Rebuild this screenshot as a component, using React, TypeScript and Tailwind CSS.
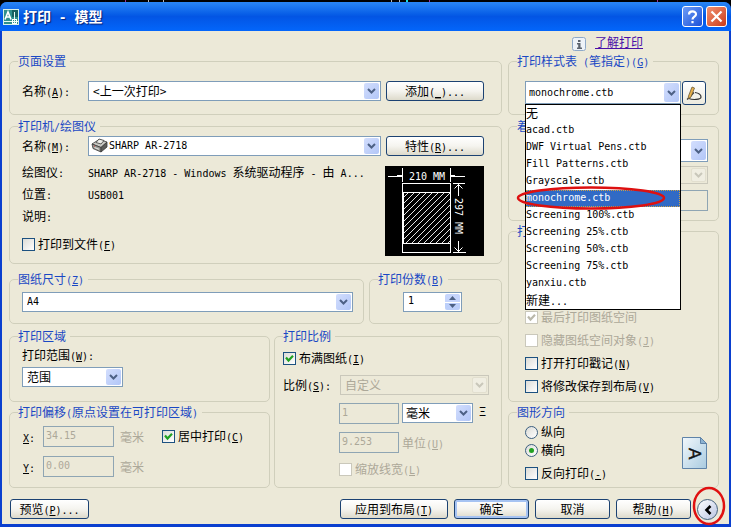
import React, { useState } from 'react';
import clsx from 'clsx';

const STYLE_TABLES = [
    '无',
    'acad.ctb',
    'DWF Virtual Pens.ctb',
    'Fill Patterns.ctb',
    'Grayscale.ctb',
    'monochrome.ctb',
    'Screening 100%.ctb',
    'Screening 25%.ctb',
    'Screening 50%.ctb',
    'Screening 75%.ctb',
    'yanxiu.ctb',
    '新建...',
];

// Latin runs use the narrow mono face; "&" marks the mnemonic letter
function Txt({ children }: { children: string }) {
    return (
        <>
            {children.split(/([\x20-\x7e]+)/).map((run, i) => {
                if (i % 2 === 0) return run;
                const at = run.indexOf('&');
                return (
                    <span key={i} className="font-['DejaVu_Sans_Mono',monospace] text-[10px] leading-none whitespace-pre">
                        {at < 0 ? run : <>{run.slice(0, at)}<u>{run[at + 1]}</u>{run.slice(at + 2)}</>}
                    </span>
                );
            })}
        </>
    );
}

function Group({ title, className, children }: { title: string; className?: string; children: React.ReactNode }) {
    return (
        <fieldset className={clsx('min-w-0 border border-[#d0cfbc] rounded-[5px] pl-2', className)}>
            <legend className="h-4 leading-4 pr-1 text-[#1a48c4] whitespace-nowrap"><Txt>{title}</Txt></legend>
            {children}
        </fieldset>
    );
}

type ComboProps = { id?: string; label?: string; value: string; disabled?: boolean; latin?: boolean; className?: string; selectClass?: string; children?: React.ReactNode };

function Combo({ id, label, value, disabled, latin, className, selectClass, children }: ComboProps) {
    return (
        <div className={clsx('relative h-5', className)}>
            <select
                id={id}
                aria-label={label}
                disabled={disabled}
                className={clsx(
                    'block appearance-none w-full h-full border pr-5 outline-none opacity-100',
                    disabled ? 'bg-[#ece9d8] border-[#cac8bb] text-[#aca899]' : 'bg-white border-[#7f9db9] text-black',
                    latin && "font-['DejaVu_Sans_Mono',monospace] text-[10px]",
                    selectClass ?? 'pl-1',
                )}
            >
                <option>{value}</option>
            </select>
            <span
                className={clsx(
                    'absolute right-[2px] inset-y-[2px] w-[15px] rounded-[2px] flex items-center justify-center pointer-events-none',
                    disabled ? 'bg-[#f0eee2] border border-[#e2dfcf] text-[#c9c7ba]' : 'bg-gradient-to-br from-[#d3defd] to-[#b2c6f7] text-[#4d6185]',
                )}
            >
                <svg width="9" height="6" viewBox="0 0 9 6" fill="none" stroke="currentColor" strokeWidth="2"><path d="M1 1l3.5 3.5L8 1" /></svg>
            </span>
            {children}
        </div>
    );
}

function Push({ children, className }: { children: string; className?: string }) {
    return (
        <button
            type="button"
            className={clsx('h-5 border border-[#1c4272] rounded-[3px] bg-gradient-to-b from-white via-[#f5f4ef] to-[#dddacb] flex items-center justify-center whitespace-nowrap', className)}
        >
            <span><Txt>{children}</Txt></span>
        </button>
    );
}

function Check({ children, checked, disabled }: { children: string; checked?: boolean; disabled?: boolean }) {
    return (
        <label className={clsx('flex items-center gap-[3px] h-4 whitespace-nowrap', disabled && 'text-[#aca899]')}>
            <span className="grid place-items-center">
                <input
                    type="checkbox"
                    defaultChecked={checked}
                    disabled={disabled}
                    className={clsx(
                        'peer appearance-none col-start-1 row-start-1 size-[13px] border',
                        disabled ? 'bg-white border-[#cac8bb]' : 'bg-gradient-to-br from-[#dcdcd7] to-white border-[#1c5180]',
                    )}
                />
                <svg className={clsx('hidden peer-checked:block col-start-1 row-start-1 pointer-events-none', disabled ? 'text-[#bab8aa]' : 'text-[#21a121]')} width="9" height="9" viewBox="0 0 9 9" fill="none" stroke="currentColor" strokeWidth="2.2">
                    <path d="M1 3.5l2.5 3L8 1.8" />
                </svg>
            </span>
            <span><Txt>{children}</Txt></span>
        </label>
    );
}

function Radio({ children, checked }: { children: string; checked?: boolean }) {
    return (
        <label className="flex items-center gap-[3px] h-4">
            <span className="grid place-items-center">
                <input type="radio" name="orientation" defaultChecked={checked} className="peer appearance-none col-start-1 row-start-1 size-[13px] rounded-full border border-[#3b5f80] bg-gradient-to-br from-[#dcdcd7] to-white" />
                <span className="hidden peer-checked:block col-start-1 row-start-1 size-[5px] rounded-full bg-[#21a121] pointer-events-none" />
            </span>
            <span>{children}</span>
        </label>
    );
}

function NumBox({ id, label, value, className }: { id?: string; label?: string; value: string; className?: string }) {
    return (
        <input
            id={id}
            aria-label={label}
            defaultValue={value}
            disabled
            className={clsx("h-[21px] border border-[#8fa5b3] bg-[#ece9d8] px-[2px] pb-[2px] font-['DejaVu_Sans_Mono',monospace] text-[10px] text-[#aca899]", className)}
        />
    );
}

function PaperPreview() {
    return (
        <svg className="block bg-black" width="99" height="90" viewBox="0 0 99 90" fill="none" stroke="#fff" shapeRendering="crispEdges">
            <defs>
                <clipPath id="printable"><rect x="18" y="27" width="47" height="50" /></clipPath>
            </defs>
            <path d="M17.5 2v14M65.5 2v14M3 10.5h14M66 10.5h14M12 9.5h5M66 9.5h4" />
            <rect x="17.5" y="17.5" width="48" height="69" />
            <rect x="18.5" y="26.5" width="47" height="51" />
            <g clipPath="url(#printable)" shapeRendering="auto" strokeWidth="0.9">
                {Array.from({ length: 17 }, (_, i) => (
                    <path key={i} d={`M18 ${32 + i * 6}L${68} ${-18 + i * 6}`} />
                ))}
            </g>
            <path d="M68 17.5h12M68 86.5h13M73.5 18v12M73.5 75v11" />
            <path d="M69.500 22.500l4-4 4 4M69.500 81.500l4 4 4-4" shapeRendering="auto" />
            <g fill="#fff" stroke="none" fontFamily="DejaVu Sans Mono, monospace" fontSize="10">
                <text x="24" y="14">210 MM</text>
                <text transform="translate(70 32) rotate(90)">297 MM</text>
            </g>
        </svg>
    );
}

function PrinterIcon() {
    return (
        <svg className="absolute left-[3px] top-[2px] pointer-events-none" width="17" height="15" viewBox="0 0 17 15" stroke="#3a3a3a" strokeWidth="0.8" strokeLinejoin="round">
            <path d="M1 6l7-4.500 8 2.500-6 5.500z" fill="#c9c9c4" />
            <path d="M1 6l9 3.500V14l-8-3.500z" fill="#989893" />
            <path d="M10 9.500L16 4v5l-6 5z" fill="#5d5d5a" />
            <path d="M5 4.500l3-3.500 5 1.500-3 3.500z" fill="#eeeeea" />
            <path d="M3.500 9.500l4.500 1.800" stroke="#fff" />
            <circle cx="3.500" cy="8" r="0.6" fill="#d33" stroke="none" />
        </svg>
    );
}

function AppIcon() {
    return (
        <svg width="16" height="16" viewBox="0 0 16 16" fill="none">
            <rect x="0.5" y="0.5" width="15" height="15" fill="#2f8f8c" stroke="#d6efe8" />
            <path d="M9 1h6v7H9z" fill="#17605f" />
            <path d="M2 10.500L5 3l3 7.500M3 8h4" stroke="#fff" strokeWidth="1.6" />
            <path d="M1 12.500h14M11.500 3v12" stroke="#e8fbf5" />
            <rect x="9.500" y="10.500" width="4" height="4" stroke="#fff" />
        </svg>
    );
}

export default function App() {
    const [table, setTable] = useState('monochrome.ctb');
    const [copies, setCopies] = useState(1);

    return (
        <div className="bg-black font-['Noto_Sans_CJK_SC',sans-serif] text-[12px] leading-4 text-black">
            {/* drawing area peeking out above the dialog */}
            <svg className="block" width="100%" height="2">
                <path d="M125.500 0v2M657.500 0v2M429.500 0v2" stroke="#a0309a" />
                <path d="M148.500 0v2M163.500 0v2M391.500 0v2M399.500 0v2" stroke="#b8b8b8" />
                <path d="M407 0v2" stroke="#16e0e0" strokeWidth="2" />
            </svg>

            <div className="rounded-t-[7px] bg-[#0a3fcf] overflow-hidden">
                <header className="h-[29px] flex items-center gap-1 pl-[3px] pr-1 bg-gradient-to-b from-[#2a86f5] via-[#0355e4] to-[#0366fb]">
                    <AppIcon />
                    <h1 className="flex-1 text-[14px] font-bold text-white [text-shadow:1px_1px_1px_#0a1f70]">
                        打印<span className="font-['DejaVu_Sans_Mono',monospace] text-[13px] whitespace-pre"> - </span>模型
                    </h1>
                    <button type="button" aria-label="帮助" className="size-[21px] rounded-[3px] border border-white bg-gradient-to-br from-[#6f9cf6] to-[#1c4fd8] text-white flex items-center justify-center">
                        <svg width="11" height="14" viewBox="0 0 11 14" fill="none" stroke="currentColor" strokeWidth="2.200"><path d="M2 4.500C2 .5 9 .5 9 4.200 9 6.700 5.500 6.500 5.500 9.500M5.500 11v2.300" /></svg>
                    </button>
                    <button type="button" aria-label="关闭" className="ml-[-1px] size-[21px] rounded-[3px] border border-white bg-gradient-to-br from-[#f09070] to-[#cb3812] text-white flex items-center justify-center">
                        <svg width="13" height="13" viewBox="0 0 13 13" fill="none" stroke="currentColor" strokeWidth="2.200"><path d="M1.500 1.500l10 10M11.500 1.500l-10 10" /></svg>
                    </button>
                </header>

                <div className="mx-[2px] mb-[3px] bg-[#ece9d8] pl-[7px] pr-[10px] pb-[5px]">
                    <main className="flex gap-[6px]">
                        <div className="flex-1 min-w-0 pt-[22px] flex flex-col">
                            <Group title="页面设置" className="pt-3 pb-[13px] pr-[17px]">
                                <div className="flex items-center pl-1">
                                    <label htmlFor="setup" className="w-[66px]"><Txt>名称(&A):</Txt></label>
                                    <Combo id="setup" value="<上一次打印>" className="flex-1" />
                                    <Push className="ml-[5px] w-[98px]">添加(&_)...</Push>
                                </div>
                            </Group>

                            <Group title="打印机/绘图仪" className="mt-[3px] pt-[2px] pb-[7px] pr-[17px]">
                                <div className="flex items-center pl-1">
                                    <label htmlFor="printer" className="w-[66px]"><Txt>名称(&M):</Txt></label>
                                    <Combo id="printer" value="SHARP AR-2718" latin className="flex-1" selectClass="pl-5">
                                        <PrinterIcon />
                                    </Combo>
                                    <Push className="ml-[5px] w-[98px]">特性(&R)...</Push>
                                </div>
                                <div className="flex pl-1">
                                    <div className="flex-1 pt-[5px]">
                                        <dl className="grid grid-cols-[66px_1fr] leading-[22px] whitespace-nowrap">
                                            <dt><Txt>绘图仪:</Txt></dt>
                                            <dd><Txt>SHARP AR-2718 - Windows 系统驱动程序 - 由 A...</Txt></dd>
                                            <dt><Txt>位置:</Txt></dt>
                                            <dd><Txt>USB001</Txt></dd>
                                            <dt><Txt>说明:</Txt></dt>
                                            <dd />
                                        </dl>
                                        <div className="flex mt-[9px]"><Check>打印到文件(&F)</Check></div>
                                    </div>
                                    <div className="pt-[10px]"><PaperPreview /></div>
                                </div>
                            </Group>

                            <div className="flex gap-[5px] mt-[7px]">
                                <Group title="图纸尺寸(&Z)" className="flex-1 pt-[5px] pb-[11px] pr-[10px]">
                                    <div className="pl-1"><Combo label="图纸尺寸" value="A4" latin /></div>
                                </Group>
                                <Group title="打印份数(&B)" className="w-[133px] pt-[5px] pb-[11px]">
                                    <div className="flex ml-[25px] w-[59px] h-5 border border-[#7f9db9] bg-white p-px">
                                        <input
                                            aria-label="打印份数"
                                            value={copies}
                                            onChange={(e) => setCopies(Number(e.target.value) || 1)}
                                            className="flex-1 min-w-0 pl-[3px] pb-[2px] font-['DejaVu_Sans_Mono',monospace] text-[10px] outline-none"
                                        />
                                        <div className="flex flex-col w-[15px] text-[#4d6185]">
                                            <button type="button" aria-label="增加" onClick={() => setCopies(copies + 1)} className="flex-1 flex items-center justify-center rounded-t-[2px] bg-[#c6d5fc]">
                                                <svg width="7" height="4" viewBox="0 0 7 4" fill="currentColor"><path d="M0 4l3.500-4L7 4z" /></svg>
                                            </button>
                                            <button type="button" aria-label="减少" onClick={() => setCopies(Math.max(1, copies - 1))} className="flex-1 flex items-center justify-center rounded-b-[2px] bg-[#bccffa] border-t border-white">
                                                <svg width="7" height="4" viewBox="0 0 7 4" fill="currentColor"><path d="M0 0l3.500 4L7 0z" /></svg>
                                            </button>
                                        </div>
                                    </div>
                                </Group>
                            </div>

                            <div className="flex gap-1 mt-1">
                                <div className="flex-1 min-w-0 flex flex-col gap-[2px]">
                                    <Group title="打印区域" className="pt-[3px] pb-[14px]">
                                        <div className="pl-1 flex flex-col gap-1">
                                            <label htmlFor="area"><Txt>打印范围(&W):</Txt></label>
                                            <Combo id="area" value="范围" className="w-[101px]" />
                                        </div>
                                    </Group>
                                    <Group title="打印偏移(原点设置在可打印区域)" className="pt-[6px] pb-[10px]">
                                        <div className="pl-[5px] flex gap-[18px] whitespace-nowrap">
                                            <div className="flex flex-col gap-[9px]">
                                                <div className="flex items-center">
                                                    <label htmlFor="offx" className="w-5"><Txt>&X:</Txt></label>
                                                    <NumBox id="offx" value="34.15" className="w-[71px]" />
                                                    <span className="ml-[6px] text-[#aca899]">毫米</span>
                                                </div>
                                                <div className="flex items-center">
                                                    <label htmlFor="offy" className="w-5"><Txt>&Y:</Txt></label>
                                                    <NumBox id="offy" value="0.00" className="w-[71px]" />
                                                    <span className="ml-[6px] text-[#aca899]">毫米</span>
                                                </div>
                                            </div>
                                            <div className="pt-[2px]"><Check checked>居中打印(&C)</Check></div>
                                        </div>
                                    </Group>
                                </div>

                                <Group title="打印比例" className="w-[228px] pt-[6px] pb-[10px] pr-3">
                                    <div className="flex flex-col gap-2">
                                        <div className="flex"><Check checked>布满图纸(&I)</Check></div>
                                        <div className="flex items-center pt-px">
                                            <label htmlFor="ratio" className="w-[57px]"><Txt>比例(&S):</Txt></label>
                                            <Combo id="ratio" value="自定义" disabled className="flex-1" />
                                        </div>
                                        <div className="flex items-start pl-[56px]">
                                            <NumBox label="图纸单位" value="1" className="w-[60px]" />
                                            <Combo label="单位" value="毫米" className="ml-[3px] w-[71px]" selectClass="pl-[3px]" />
                                            <span className="ml-[6px]">Ξ</span>
                                        </div>
                                        <div className="flex items-center pl-[56px]">
                                            <NumBox id="units" value="9.253" className="w-[60px]" />
                                            <label htmlFor="units" className="ml-[3px] text-[#aca899]"><Txt>单位(&U)</Txt></label>
                                        </div>
                                        <div className="flex pl-[56px]"><Check disabled>缩放线宽(&L)</Check></div>
                                    </div>
                                </Group>
                            </div>
                        </div>

                        <div className="w-[211px] flex flex-col">
                            <div className="h-[22px] pl-16 flex items-center gap-2">
                                <svg className="mt-[5px]" width="15" height="15" viewBox="0 0 15 15">
                                    <rect x="0.5" y="0.5" width="13" height="13" rx="2" fill="#eef3f8" stroke="#8ea9c8" />
                                    <path d="M6 3h2.500v2H6zM5 6h3.500v4.500H10V12H5v-1.500h1.200v-3H5z" fill="#5c646e" />
                                </svg>
                                <a href="#learn" className="underline text-[#4a10a8]">了解打印</a>
                            </div>

                            <Group title="打印样式表 (笔指定)(&G)" className="pt-3 pb-[9px]">
                                <div className="flex gap-px pl-2">
                                    <Combo label="打印样式表" value={table} latin className="w-[156px] h-[23px]" selectClass="pl-[3px]">
                                        <ul role="listbox" aria-label="打印样式表" className="absolute z-10 top-full inset-x-0 bg-white border border-black">
                                            {STYLE_TABLES.map((name) => (
                                                <li
                                                    key={name}
                                                    role="option"
                                                    aria-selected={name === table}
                                                    onClick={() => setTable(name)}
                                                    className={clsx(
                                                        'h-[17px] leading-[15px]',
                                                        name.endsWith('.ctb') && "font-['DejaVu_Sans_Mono',monospace] text-[10px]",
                                                        name === table && 'bg-[#316ac5] text-white outline-1 outline-dotted -outline-offset-1 outline-[#c9a24a]',
                                                    )}
                                                >
                                                    {name.endsWith('.ctb') ? name : <Txt>{name}</Txt>}
                                                </li>
                                            ))}
                                        </ul>
                                        <svg className="absolute z-20 left-[-9px] top-[105px] pointer-events-none" width="150" height="26" viewBox="0 0 150 26" fill="none">
                                            <ellipse cx="75" cy="12" rx="73" ry="10.500" stroke="#dd1010" strokeWidth="2.500" />
                                        </svg>
                                    </Combo>
                                    <button type="button" aria-label="编辑" className="size-6 border border-[#1c4272] rounded-[3px] bg-gradient-to-b from-white to-[#eceade] flex items-center justify-center">
                                        <svg width="18" height="16" viewBox="0 0 18 16" fill="none" stroke="#333" strokeWidth="1.200">
                                            <path d="M2 14.500c3-2 5-5 7-7M4 13.500c3 1.500 12 1.500 12-1.500 0-2.500-3-4-6-4.500" />
                                            <path d="M3.500 11L7 2l2.500 1L6 12l-3 2z" fill="#e8b04a" stroke="#6a5a3a" strokeWidth="0.800" />
                                        </svg>
                                    </button>
                                </div>
                            </Group>

                            <Group title="着" className="mt-[3px] pt-[5px] pb-[9px] pr-[10px]">
                                <div className="pl-14 flex flex-col">
                                    <Combo label="着色打印" value="" className="h-[23px]" />
                                    <Combo label="质量" value="" disabled className="mt-1 h-[18px]" />
                                    <NumBox label="DPI" value="" className="mt-[6px]" />
                                </div>
                            </Group>

                            <Group title="打" className="mt-[2px] pt-[70px] pb-[7px]">
                                <div className="pl-2 flex flex-col items-start gap-[7px]">
                                    <Check checked disabled>最后打印图纸空间</Check>
                                    <Check disabled>隐藏图纸空间对象(&J)</Check>
                                    <Check>打开打印戳记(&N)</Check>
                                    <Check>将修改保存到布局(&V)</Check>
                                </div>
                            </Group>

                            <Group title="图形方向" className="mt-[2px] pt-1 pb-[6px] pr-[11px]">
                                <div className="pl-2 flex items-center justify-between">
                                    <div className="flex flex-col items-start gap-[2px]">
                                        <Radio>纵向</Radio>
                                        <Radio checked>横向</Radio>
                                        <div className="pt-[5px]"><Check>反向打印(&-)</Check></div>
                                    </div>
                                    <svg width="25" height="32" viewBox="0 0 25 32">
                                        <defs>
                                            <linearGradient id="page" x1="0" y1="0" x2="1" y2="1">
                                                <stop offset="0" stopColor="#f2f8fc" />
                                                <stop offset="1" stopColor="#a9cbe0" />
                                            </linearGradient>
                                        </defs>
                                        <path d="M0.500 0.500h18l6 6v25h-24z" fill="url(#page)" stroke="#5f83a8" />
                                        <path d="M18.500 0.500v6h6z" fill="#8db3d2" stroke="#5f83a8" />
                                        <text transform="translate(7 11) rotate(90)" fontFamily="Liberation Sans, sans-serif" fontSize="17" fill="#111" stroke="#111" strokeWidth="0.5">A</text>
                                    </svg>
                                </div>
                            </Group>
                        </div>
                    </main>

                    <footer className="flex items-center gap-[6px] mt-[11px] px-px">
                        <Push className="w-[79px] mr-auto">预览(&P)...</Push>
                        <Push className="w-[108px]">应用到布局(&T)</Push>
                        <Push className="w-[75px] shadow-[inset_0_0_0_2px_#a6c3f2]">确定</Push>
                        <Push className="w-[75px]">取消</Push>
                        <Push className="w-[75px]">帮助(&H)</Push>
                        <div className="relative h-5">
                            <button type="button" aria-label="收起" className="size-[21px] rounded-full border border-[#44607c] bg-gradient-to-br from-white to-[#bcc6e2] flex items-center justify-center">
                                <svg width="8" height="10" viewBox="0 0 8 10" fill="none" stroke="#000" strokeWidth="2.600"><path d="M6.500 1L2.500 5l4 4" /></svg>
                            </button>
                            <svg className="absolute left-[-5px] top-[-13px] pointer-events-none" width="34" height="40" viewBox="0 0 34 40" fill="none">
                                <ellipse cx="17" cy="20" rx="15" ry="18" stroke="#e01010" strokeWidth="2.500" />
                            </svg>
                        </div>
                    </footer>
                </div>
            </div>
        </div>
    );
}
